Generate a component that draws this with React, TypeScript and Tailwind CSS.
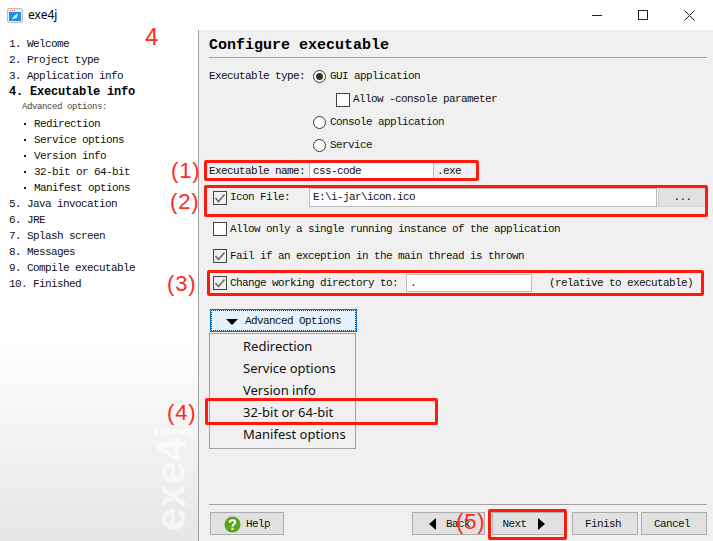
const steps = [
  { label: '1. Welcome' },
  { label: '2. Project type' },
  { label: '3. Application info' },
  { label: '4. Executable info', active: true },
  { label: 'Advanced options:', note: true },
  { label: 'Redirection', sub: true },
  { label: 'Service options', sub: true },
  { label: 'Version info', sub: true },
  { label: '32-bit or 64-bit', sub: true },
  { label: 'Manifest options', sub: true },
  { label: '5. Java invocation' },
  { label: '6. JRE' },
  { label: '7. Splash screen' },
  { label: '8. Messages' },
  { label: '9. Compile executable' },
  { label: '10. Finished' },
]

const menuItems = ['Redirection', 'Service options', 'Version info', '32-bit or 64-bit', 'Manifest options']

function Check({ checked }: { checked?: boolean }) {
  return (
    <span className={`flex h-[14px] w-[14px] shrink-0 items-center justify-center border border-[#444] ${checked ? 'bg-[#f0f0f0]' : 'bg-white'}`}>
      {checked && (
        <svg width="12" height="12" viewBox="0 0 12 12" fill="none">
          <path d="M1.5 6L4.5 9.5L10.5 2.5" stroke="#666" strokeWidth="1.5" />
        </svg>
      )}
    </span>
  )
}

function Radio({ checked }: { checked?: boolean }) {
  return (
    <span className="flex h-[13px] w-[13px] shrink-0 items-center justify-center rounded-full border border-[#333] bg-white">
      {checked && <span className="h-[7px] w-[7px] rounded-full bg-[#333]" />}
    </span>
  )
}

function Triangle({ dir }: { dir: 'left' | 'right' | 'down' }) {
  const d = dir === 'left' ? 'M9 0V12L2 6Z' : dir === 'right' ? 'M2 0V12L9 6Z' : 'M0 2H12L6 8Z'
  return (
    <svg width={dir === 'down' ? 12 : 10} height={dir === 'down' ? 9 : 12} viewBox={dir === 'down' ? '0 0 12 9' : '0 0 10 12'}>
      <path d={d} fill="#000" />
    </svg>
  )
}

function Annot({ text, className }: { text: string; className: string }) {
  return <span className={`absolute font-['Liberation_Sans',sans-serif] text-[#ff2a1a] ${className}`}>{text}</span>
}

export default function App() {
  return (
    <div className="relative flex h-[541px] w-[713px] flex-col overflow-hidden bg-white font-['Liberation_Mono',monospace] text-[11px] tracking-[-0.6px] text-[#111]">
      {/* Title bar */}
      <div className="flex h-[30px] shrink-0 items-center">
        <svg className="ml-[7px]" width="16" height="15" viewBox="0 0 16 15">
          <rect x="0.5" y="0.5" width="15" height="14" rx="1.5" fill="#eceff3" stroke="#bdbdbd" />
          <rect x="2" y="4" width="12" height="9" fill="#1e90f0" />
          <path d="M3 1.5H4M5 1.5H6M7 1.5H8" stroke="#d9605a" strokeWidth="1" transform="translate(0 1)" />
          <path d="M5 12L7 8L11 5.5L10 9.5L7 10.5Z" fill="#fff" />
        </svg>
        <span className="ml-[5px] font-['Noto_Sans',sans-serif] text-[12px] tracking-normal text-black">exe4j</span>
        <div className="ml-auto mr-[18px] flex items-center gap-[35px]">
          <svg width="11" height="11" viewBox="0 0 11 11">
            <path d="M0 5.5H10" stroke="#222" />
          </svg>
          <svg width="11" height="11" viewBox="0 0 11 11" fill="none">
            <rect x="0.5" y="0.5" width="9" height="9" stroke="#222" />
          </svg>
          <svg width="11" height="11" viewBox="0 0 11 11" fill="none">
            <path d="M0.5 0.5L10.5 10.5M10.5 0.5L0.5 10.5" stroke="#222" />
          </svg>
        </div>
      </div>

      <div className="flex min-h-0 flex-1">
        {/* Sidebar */}
        <aside className="relative w-[199px] shrink-0 border-r border-[#a0a0a0] bg-gradient-to-b from-white from-60% to-[#e6e6e6] pt-[6px] pl-[9px]">
          {steps.map((s) => (
            <div key={s.label} className="flex h-[16px] items-center whitespace-pre">
              {s.note ? (
                <span className="ml-[13px] text-[9px] tracking-[-0.4px] text-[#444]">{s.label}</span>
              ) : s.sub ? (
                <>
                  <span className="ml-[15px] h-[2px] w-[2px] bg-[#222]" />
                  <span className="ml-[8px]">{s.label}</span>
                </>
              ) : s.active ? (
                <span className="text-[12px] font-bold tracking-[-0.2px] text-black">{s.label}</span>
              ) : (
                <span>{s.label}</span>
              )}
            </div>
          ))}
          <span className="absolute bottom-[10px] left-[150px] rotate-180 font-['Liberation_Sans',sans-serif] text-[42px] leading-none font-bold tracking-normal text-white/60 [writing-mode:vertical-rl]">
            exe4j
          </span>
        </aside>

        {/* Main panel */}
        <main className="flex min-w-0 flex-1 flex-col bg-[#f0f0f0] pr-[6px] pl-[10px]">
          <div className="flex h-[28px] shrink-0 items-center border-b border-[#a0a0a0] pt-[5px] text-[15px] font-bold tracking-normal text-black">
            Configure executable
          </div>

          <div className="mt-[7px] flex h-[23px] items-center">
            <span className="w-[104px]">Executable type:</span>
            <Radio checked />
            <span className="ml-[4px]">GUI application</span>
          </div>
          <div className="flex h-[23px] items-center pl-[127px]">
            <Check />
            <span className="ml-[3px]">Allow -console parameter</span>
          </div>
          <div className="flex h-[23px] items-center pl-[104px]">
            <Radio />
            <span className="ml-[4px]">Console application</span>
          </div>
          <div className="flex h-[23px] items-center pl-[104px]">
            <Radio />
            <span className="ml-[4px]">Service</span>
          </div>

          <div className="mt-[5px] flex h-[19px] items-center">
            <span className="w-[100px]">Executable name:</span>
            <div className="flex h-full w-[125px] items-center border border-[#bbb] bg-white pl-[3px]">css-code</div>
            <span className="ml-[3px]">.exe</span>
          </div>

          <div className="mt-[7px] flex h-[19px] items-center pl-[4px]">
            <Check checked />
            <span className="ml-[3px] w-[79px]">Icon File:</span>
            <div className="flex h-full w-[348px] items-center border border-[#bbb] bg-white pl-[3px]">E:\i-jar\icon.ico</div>
            <div className="ml-[1px] flex h-full flex-1 items-center justify-center border border-[#d0d0d0] bg-[#e1e1e1]">...</div>
          </div>

          <div className="mt-[12px] flex h-[20px] items-center pl-[4px]">
            <Check />
            <span className="ml-[3px]">Allow only a single running instance of the application</span>
          </div>
          <div className="mt-[7px] flex h-[20px] items-center pl-[4px]">
            <Check checked />
            <span className="ml-[3px]">Fail if an exception in the main thread is thrown</span>
          </div>

          <div className="mt-[8px] flex h-[18px] items-center pl-[4px]">
            <Check checked />
            <span className="ml-[3px] w-[176px]">Change working directory to:</span>
            <div className="flex h-full w-[126px] items-center border border-[#bbb] bg-white pl-[3px]">.</div>
            <span className="ml-[17px]">(relative to executable)</span>
          </div>

          <div className="mt-[17px] ml-[1px] flex h-[23px] w-[147px] items-center justify-center gap-[7px] border border-[#0078d7] bg-[#e5f1fb] pt-[1px] outline-1 -outline-offset-2 outline-[#333] outline-dotted">
            <Triangle dir="down" />
            <span>Advanced Options</span>
          </div>

          <div className="mt-[1px] flex h-[116px] w-[147px] flex-col justify-center border border-[#a0a0a0] bg-[#f0f0f0] pl-[33px] font-['Noto_Sans',sans-serif] text-[13px] tracking-normal text-[#111]">
            {menuItems.map((item) => (
              <div key={item} className="flex h-[22px] items-center whitespace-nowrap">
                {item}
              </div>
            ))}
          </div>

          <div className="mt-auto flex h-[37px] shrink-0 items-start border-t border-[#a0a0a0] pt-[7px]">
            <button className="ml-[1px] flex h-[23px] w-[74px] items-center justify-center gap-[5px] border border-[#adadad] bg-[#e1e1e1] pt-[1px]">
              <svg width="17" height="17" viewBox="0 0 17 17" fill="none">
                <circle cx="8.5" cy="8.5" r="8" fill="#5aa51e" />
                <path d="M5.8 6.6C5.8 3.6 11.2 3.6 11.2 6.6C11.2 8.4 8.5 8.2 8.5 10.4" stroke="#fff" strokeWidth="2" />
                <rect x="7.4" y="11.6" width="2.2" height="2.2" fill="#fff" />
              </svg>
              Help
            </button>
            <button className="ml-auto flex h-[23px] w-[73px] items-center justify-center gap-[9px] border border-[#adadad] bg-[#e1e1e1] pt-[1px]">
              <Triangle dir="left" />
              Back
            </button>
            <button className="ml-[7px] flex h-[23px] w-[74px] items-center justify-center gap-[9px] border border-[#adadad] bg-[#e1e1e1] pt-[1px] pr-[10px]">
              Next
              <Triangle dir="right" />
            </button>
            <button className="ml-[6px] h-[23px] w-[66px] border border-[#adadad] bg-[#e1e1e1] pt-[1px] pr-[4px]">Finish</button>
            <button className="ml-[3px] h-[23px] w-[66px] border border-[#adadad] bg-[#e1e1e1] pt-[1px] pr-[4px]">Cancel</button>
          </div>
        </main>
      </div>

      {/* Red annotations drawn over the screenshot */}
      <div className="absolute top-[160px] left-[204px] h-[21px] w-[275px] rounded-[2px] border-[3px] border-[#ff1a0d]" />
      <div className="absolute top-[185px] left-[204px] h-[32px] w-[504px] rounded-[2px] border-[3px] border-[#ff1a0d]" />
      <div className="absolute top-[270px] left-[207px] h-[26px] w-[497px] rounded-[2px] border-[3px] border-[#ff1a0d]" />
      <div className="absolute top-[398px] left-[205px] h-[27px] w-[233px] rounded-[2px] border-[3px] border-[#ff1a0d]" />
      <div className="absolute top-[509px] left-[488px] h-[31px] w-[79px] rounded-[2px] border-[3px] border-[#ff1a0d]" />
      <Annot text="4" className="top-[19px] left-[145px] text-[24px] tracking-normal" />
      <Annot text="(1)" className="top-[154px] left-[171px] text-[22px] tracking-[0.8px]" />
      <Annot text="(2)" className="top-[185px] left-[170px] text-[22px] tracking-[0.8px]" />
      <Annot text="(3)" className="top-[267px] left-[167px] text-[22px] tracking-[0.8px]" />
      <Annot text="(4)" className="top-[396px] left-[167px] text-[22px] tracking-[0.8px]" />
      <Annot text="(5)" className="top-[505px] left-[456px] text-[22px] tracking-[0.8px]" />
    </div>
  )
}
